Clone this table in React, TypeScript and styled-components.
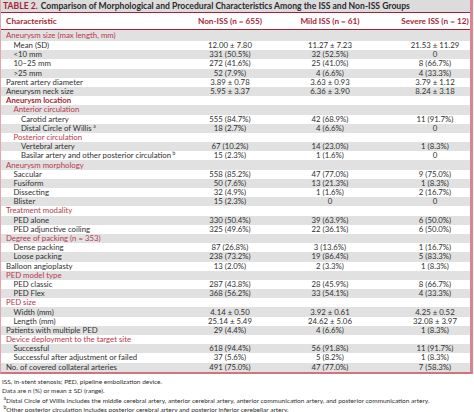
import styled, { createGlobalStyle } from 'styled-components';

type RowKind = 'section' | 'heading' | 'group' | 'item';

type RowData = {
  label: string;
  kind: RowKind;
  indent: number;
  sup?: string;
  values: [string, string, string];
};

const rows: RowData[] = [
  { label: 'Aneurysm size (max length, mm)', kind: 'section', indent: 0, values: ['', '', ''] },
  { label: 'Mean (SD)', kind: 'item', indent: 1, values: ['12.00 ± 7.80', '11.27 ± 7.23', '21.53 ± 11.29'] },
  { label: '<10 mm', kind: 'item', indent: 1, values: ['331 (50.5%)', '32 (52.5%)', '0'] },
  { label: '10–25 mm', kind: 'item', indent: 1, values: ['272 (41.6%)', '25 (41.0%)', '8 (66.7%)'] },
  { label: '>25 mm', kind: 'item', indent: 1, values: ['52 (7.9%)', '4 (6.6%)', '4 (33.3%)'] },
  { label: 'Parent artery diameter', kind: 'item', indent: 0, values: ['3.89 ± 0.78', '3.63 ± 0.93', '3.79 ± 1.12'] },
  { label: 'Aneurysm neck size', kind: 'item', indent: 0, values: ['5.95 ± 3.37', '6.36 ± 3.90', '8.24 ± 3.18'] },
  { label: 'Aneurysm location', kind: 'heading', indent: 0, values: ['', '', ''] },
  { label: 'Anterior circulation', kind: 'group', indent: 1, values: ['', '', ''] },
  { label: 'Carotid artery', kind: 'item', indent: 2, values: ['555 (84.7%)', '42 (68.9%)', '11 (91.7%)'] },
  { label: 'Distal Circle of Willis', sup: 'a', kind: 'item', indent: 2, values: ['18 (2.7%)', '4 (6.6%)', '0'] },
  { label: 'Posterior circulation', kind: 'group', indent: 1, values: ['', '', ''] },
  { label: 'Vertebral artery', kind: 'item', indent: 2, values: ['67 (10.2%)', '14 (23.0%)', '1 (8.3%)'] },
  { label: 'Basilar artery and other posterior circulation', sup: 'b', kind: 'item', indent: 2, values: ['15 (2.3%)', '1 (1.6%)', '0'] },
  { label: 'Aneurysm morphology', kind: 'section', indent: 0, values: ['', '', ''] },
  { label: 'Saccular', kind: 'item', indent: 1, values: ['558 (85.2%)', '47 (77.0%)', '9 (75.0%)'] },
  { label: 'Fusiform', kind: 'item', indent: 1, values: ['50 (7.6%)', '13 (21.3%)', '1 (8.3%)'] },
  { label: 'Dissecting', kind: 'item', indent: 1, values: ['32 (4.9%)', '1 (1.6%)', '2 (16.7%)'] },
  { label: 'Blister', kind: 'item', indent: 1, values: ['15 (2.3%)', '0', '0'] },
  { label: 'Treatment modality', kind: 'section', indent: 0, values: ['', '', ''] },
  { label: 'PED alone', kind: 'item', indent: 1, values: ['330 (50.4%)', '39 (63.9%)', '6 (50.0%)'] },
  { label: 'PED adjunctive coiling', kind: 'item', indent: 1, values: ['325 (49.6%)', '22 (36.1%)', '6 (50.0%)'] },
  { label: 'Degree of packing (n = 353)', kind: 'section', indent: 0, values: ['', '', ''] },
  { label: 'Dense packing', kind: 'item', indent: 1, values: ['87 (26.8%)', '3 (13.6%)', '1 (16.7%)'] },
  { label: 'Loose packing', kind: 'item', indent: 1, values: ['238 (73.2%)', '19 (86.4%)', '5 (83.3%)'] },
  { label: 'Balloon angioplasty', kind: 'item', indent: 0, values: ['13 (2.0%)', '2 (3.3%)', '1 (8.3%)'] },
  { label: 'PED model type', kind: 'section', indent: 0, values: ['', '', ''] },
  { label: 'PED classic', kind: 'item', indent: 1, values: ['287 (43.8%)', '28 (45.9%)', '8 (66.7%)'] },
  { label: 'PED Flex', kind: 'item', indent: 1, values: ['368 (56.2%)', '33 (54.1%)', '4 (33.3%)'] },
  { label: 'PED size', kind: 'section', indent: 0, values: ['', '', ''] },
  { label: 'Width (mm)', kind: 'item', indent: 1, values: ['4.14 ± 0.50', '3.92 ± 0.61', '4.25 ± 0.52'] },
  { label: 'Length (mm)', kind: 'item', indent: 1, values: ['25.14 ± 5.49', '24.62 ± 5.06', '32.08 ± 3.97'] },
  { label: 'Patients with multiple PED', kind: 'item', indent: 0, values: ['29 (4.4%)', '4 (6.6%)', '1 (8.3%)'] },
  { label: 'Device deployment to the target site', kind: 'section', indent: 0, values: ['', '', ''] },
  { label: 'Successful', kind: 'item', indent: 1, values: ['618 (94.4%)', '56 (91.8%)', '11 (91.7%)'] },
  { label: 'Successful after adjustment or failed', kind: 'item', indent: 1, values: ['37 (5.6%)', '5 (8.2%)', '1 (8.3%)'] },
  { label: 'No. of covered collateral arteries', kind: 'item', indent: 0, values: ['491 (75.0%)', '47 (77.0%)', '7 (58.3%)'] },
];

const red = '#a81f36';
const sectionRed = '#b8384c';
const ink = '#303030';

const GlobalStyle = createGlobalStyle`
  html, body {
    margin: 0;
    padding: 0;
    background: #ffffff;
  }
  body {
    font-family: Lato, "Liberation Sans", sans-serif;
    color: ${ink};
  }
`;

const Page = styled.div`
  width: 474px;
  height: 412px;
  overflow: hidden;
`;

const Table = styled.div`
  width: 473px;
  box-sizing: border-box;
  border-left: 1px solid #e2a7ae;
  border-right: 3px solid #d9848f;
  border-bottom: 2px solid #cf7480;
`;

const TitleBar = styled.div`
  height: 12px;
  background: #dcdcdc;
  border-bottom: 1.5px solid ${red};
  padding-left: 2px;
  font-size: 8.6px;
  font-weight: 700;
  line-height: 12px;
  color: #2a2a2a;
  white-space: nowrap;
`;

const TableLabel = styled.span`
  color: ${red};
  margin-right: 3px;
`;

const Grid = styled.div`
  display: grid;
  grid-template-columns: 185px 88px 112px 1fr;
`;

const HeadRow = styled(Grid)`
  height: 16px;
  border-bottom: 1.5px solid ${red};
  align-items: center;
  font-size: 8.2px;
  font-weight: 700;
  color: ${red};
`;

const HeadCell = styled.div<{ $first?: boolean; $last?: boolean }>`
  text-align: ${p => (p.$first ? 'left' : 'center')};
  padding-left: ${p => (p.$first ? '5px' : p.$last ? '14px' : '0')};
  white-space: nowrap;
`;

const Row = styled(Grid)<{ $shaded: boolean; $tall?: boolean }>`
  height: ${p => (p.$tall ? '11px' : '9.2px')};
  align-items: center;
  background: ${p => (p.$shaded ? '#e1e1e1' : '#ffffff')};
  font-size: 7.8px;
  line-height: 9px;
`;

const Label = styled.div<{ $kind: RowKind; $indent: number }>`
  padding-left: ${p => 5 + p.$indent * 7.5}px;
  white-space: nowrap;
  color: ${p =>
    p.$kind === 'heading' ? red : p.$kind === 'item' ? ink : sectionRed};
  font-weight: ${p => (p.$kind === 'heading' ? 700 : 400)};
`;

const Value = styled.div<{ $last?: boolean }>`
  text-align: center;
  white-space: nowrap;
  padding-left: ${p => (p.$last ? '14px' : '0')};
`;

const Sup = styled.sup`
  font-size: 5px;
  line-height: 0;
  vertical-align: 3px;
  margin-left: 1.5px;
`;

const Notes = styled.div`
  padding: 3px 0 0 2px;
  font-size: 6.5px;
  line-height: 9.4px;
  color: #2e2e2e;
`;

const Note = styled.div`
  white-space: nowrap;
`;

export default function App() {
  return (
    <Page>
      <GlobalStyle />
      <Table>
        <TitleBar>
          <TableLabel>TABLE 2.</TableLabel>
          Comparison of Morphological and Procedural Characteristics Among the ISS and Non-ISS Groups
        </TitleBar>
        <HeadRow>
          <HeadCell $first>Characteristic</HeadCell>
          <HeadCell>Non-ISS (n = 655)</HeadCell>
          <HeadCell>Mild ISS (n = 61)</HeadCell>
          <HeadCell $last>Severe ISS (n = 12)</HeadCell>
        </HeadRow>
        {rows.map((row, i) => (
          <Row key={row.label} $shaded={i % 2 === 0} $tall={i === 0}>
            <Label $kind={row.kind} $indent={row.indent}>
              {row.label}
              {row.sup && <Sup>{row.sup}</Sup>}
            </Label>
            <Value>{row.values[0]}</Value>
            <Value>{row.values[1]}</Value>
            <Value $last>{row.values[2]}</Value>
          </Row>
        ))}
      </Table>
      <Notes>
        <Note>ISS, in-stent stenosis; PED, pipeline embolization device.</Note>
        <Note>Data are n (%) or mean ± SD (range).</Note>
        <Note>
          <Sup>a</Sup>Distal Circle of Willis includes the middle cerebral artery, anterior cerebral artery, anterior
          communication artery, and posterior communication artery.
        </Note>
        <Note>
          <Sup>b</Sup>Other posterior circulation includes posterior cerebral artery and posterior inferior cerebellar
          artery.
        </Note>
      </Notes>
    </Page>
  );
}
